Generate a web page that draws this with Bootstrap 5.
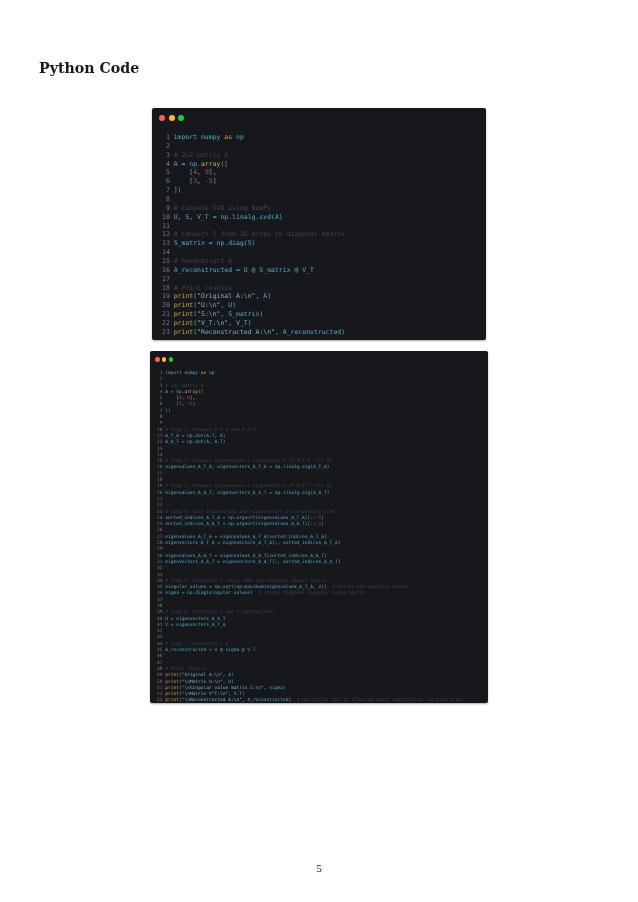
<!DOCTYPE html>
<html lang="en">
<head>
<meta charset="utf-8">
<title>Python Code</title>
<link href="https://cdn.jsdelivr.net/npm/bootstrap@5.3.0/dist/css/bootstrap.min.css" rel="stylesheet">
<style>
html,body{background:#fff;}
.sheet{width:638px;height:902px;display:flex;flex-direction:column;overflow:hidden;}
.doc-title{font-family:"DejaVu Serif","Liberation Serif",serif;font-weight:700;font-size:14.2px;line-height:18px;color:#1a1a1a;margin:59px 0 0 39px;filter:blur(.25px);}
.code-win{background:#16181c;border-radius:2px;box-shadow:0 1px 2px rgba(0,0,0,.35);margin-left:auto;margin-right:auto;}
.win-a{width:334px;height:232px;margin-top:31px;padding:7px 0 0 7px;}
.win-b{width:338px;height:352px;margin-top:11px;padding:6px 0 0 5px;}
.lights{display:flex;}
.win-a .lights{gap:3.7px;}
.win-b .lights{gap:2.3px;}
.light{border-radius:50%;display:block;}
.win-a .light{width:6px;height:6px;}
.win-b .light{width:4.5px;height:4.5px;}
.l-r{background:#ff5f56;}.l-y{background:#ffbd2e;}.l-g{background:#27c93f;}
.code-text{font-family:"DejaVu Sans Mono","Liberation Mono",monospace;margin:0;overflow:hidden;color:#58a6c4;white-space:pre;filter:blur(.3px);}
.win-a .code-text{font-size:6.47px;line-height:8.86px;margin-top:12px;padding-left:3px;}
.win-b .code-text{font-size:4.55px;line-height:6.29px;margin-top:8.5px;padding-left:2px;}
.n{color:#74797e;}
.k{color:#c9a545;}
.c{color:#3f454b;}
.d{color:#b84a54;}
.s{color:#7db2c8;}
.page-no{font-family:"Liberation Serif",serif;font-size:11px;line-height:14px;color:#222;text-align:center;margin-top:auto;margin-bottom:27px;}
</style>
</head>
<body>
<div class="sheet">
<h1 class="doc-title">Python Code</h1>

<div class="code-win win-a">
<div class="lights"><span class="light l-r"></span><span class="light l-y"></span><span class="light l-g"></span></div>
<pre class="code-text"><span class="n"> 1</span> import numpy <span class="k">as</span> np
<span class="n"> 2</span>
<span class="n"> 3</span> <span class="c"># 2x2 matrix A</span>
<span class="n"> 4</span> A = np.<span class="k">array</span>([
<span class="n"> 5</span>     [<span class="d">4</span>, <span class="d">0</span>],
<span class="n"> 6</span>     [<span class="d">3</span>, <span class="d">-5</span>]
<span class="n"> 7</span> ])
<span class="n"> 8</span>
<span class="n"> 9</span> <span class="c"># Compute SVD using NumPy</span>
<span class="n">10</span> U, S, V_T = np.linalg.svd(A)
<span class="n">11</span>
<span class="n">12</span> <span class="c"># Convert S from 1D array to diagonal matrix</span>
<span class="n">13</span> S_matrix = np.diag(S)
<span class="n">14</span>
<span class="n">15</span> <span class="c"># Reconstruct A</span>
<span class="n">16</span> A_reconstructed = U @ S_matrix @ V_T
<span class="n">17</span>
<span class="n">18</span> <span class="c"># Print results</span>
<span class="n">19</span> <span class="k">print</span>(<span class="s">"Original A:\n"</span>, A)
<span class="n">20</span> <span class="k">print</span>(<span class="s">"U:\n"</span>, U)
<span class="n">21</span> <span class="k">print</span>(<span class="s">"S:\n"</span>, S_matrix)
<span class="n">22</span> <span class="k">print</span>(<span class="s">"V_T:\n"</span>, V_T)
<span class="n">23</span> <span class="k">print</span>(<span class="s">"Reconstructed A:\n"</span>, A_reconstructed)</pre>
</div>

<div class="code-win win-b">
<div class="lights"><span class="light l-r"></span><span class="light l-y"></span><span class="light l-g"></span></div>
<pre class="code-text"><span class="n"> 1</span> import numpy <span class="k">as</span> np
<span class="n"> 2</span>
<span class="n"> 3</span> <span class="c"># 2x2 matrix A</span>
<span class="n"> 4</span> A = np.<span class="k">array</span>([
<span class="n"> 5</span>     [<span class="d">4</span>, <span class="d">0</span>],
<span class="n"> 6</span>     [<span class="d">3</span>, <span class="d">-5</span>]
<span class="n"> 7</span> ])
<span class="n"> 8</span>
<span class="n"> 9</span>
<span class="n">10</span> <span class="c"># Step 1: Compute A^T A and A A^T</span>
<span class="n">11</span> A_T_A = np.dot(A.T, A)
<span class="n">12</span> A_A_T = np.dot(A, A.T)
<span class="n">13</span>
<span class="n">14</span>
<span class="n">15</span> <span class="c"># Step 2: Compute eigenvalues &amp; eigenvectors of A^T A (for V)</span>
<span class="n">16</span> eigenvalues_A_T_A, eigenvectors_A_T_A = np.linalg.eig(A_T_A)
<span class="n">17</span>
<span class="n">18</span>
<span class="n">19</span> <span class="c"># Step 3: Compute eigenvalues &amp; eigenvectors of A A^T (for U)</span>
<span class="n">20</span> eigenvalues_A_A_T, eigenvectors_A_A_T = np.linalg.eig(A_A_T)
<span class="n">21</span>
<span class="n">22</span>
<span class="n">23</span> <span class="c"># Step 4: Sort eigenvalues and eigenvectors in descending order</span>
<span class="n">24</span> sorted_indices_A_T_A = np.argsort(eigenvalues_A_T_A)[::<span class="d">-1</span>]
<span class="n">25</span> sorted_indices_A_A_T = np.argsort(eigenvalues_A_A_T)[::<span class="d">-1</span>]
<span class="n">26</span>
<span class="n">27</span> eigenvalues_A_T_A = eigenvalues_A_T_A[sorted_indices_A_T_A]
<span class="n">28</span> eigenvectors_A_T_A = eigenvectors_A_T_A[:, sorted_indices_A_T_A]
<span class="n">29</span>
<span class="n">30</span> eigenvalues_A_A_T = eigenvalues_A_A_T[sorted_indices_A_A_T]
<span class="n">31</span> eigenvectors_A_A_T = eigenvectors_A_A_T[:, sorted_indices_A_A_T]
<span class="n">32</span>
<span class="n">33</span>
<span class="n">34</span> <span class="c"># Step 5: Construct Σ (only take non-negative square roots)</span>
<span class="n">35</span> singular_values = np.sqrt(np.maximum(eigenvalues_A_T_A, <span class="d">0</span>))  <span class="c"># Ensure non-negative values</span>
<span class="n">36</span> sigma = np.diag(singular_values)  <span class="c"># Create diagonal singular value matrix</span>
<span class="n">37</span>
<span class="n">38</span>
<span class="n">39</span> <span class="c"># Step 6: Construct U and V (normalized)</span>
<span class="n">40</span> U = eigenvectors_A_A_T
<span class="n">41</span> V = eigenvectors_A_T_A
<span class="n">42</span>
<span class="n">43</span>
<span class="n">44</span> <span class="c"># Step 7: Reconstruct A</span>
<span class="n">45</span> A_reconstructed = U @ sigma @ V.T
<span class="n">46</span>
<span class="n">47</span>
<span class="n">48</span> <span class="c"># Print results</span>
<span class="n">49</span> <span class="k">print</span>(<span class="s">"Original A:\n"</span>, A)
<span class="n">50</span> <span class="k">print</span>(<span class="s">"\nMatrix U:\n"</span>, U)
<span class="n">51</span> <span class="k">print</span>(<span class="s">"\nSingular value matrix Σ:\n"</span>, sigma)
<span class="n">52</span> <span class="k">print</span>(<span class="s">"\nMatrix V^T:\n"</span>, V.T)
<span class="n">53</span> <span class="k">print</span>(<span class="s">"\nReconstructed A:\n"</span>, A_reconstructed)  <span class="c"># May differ due to floating-point imprecision, sorting order</span></pre>
</div>

<div class="page-no">5</div>
</div>
<script src="https://cdn.jsdelivr.net/npm/bootstrap@5.3.0/dist/js/bootstrap.bundle.min.js"></script>
</body>
</html>
